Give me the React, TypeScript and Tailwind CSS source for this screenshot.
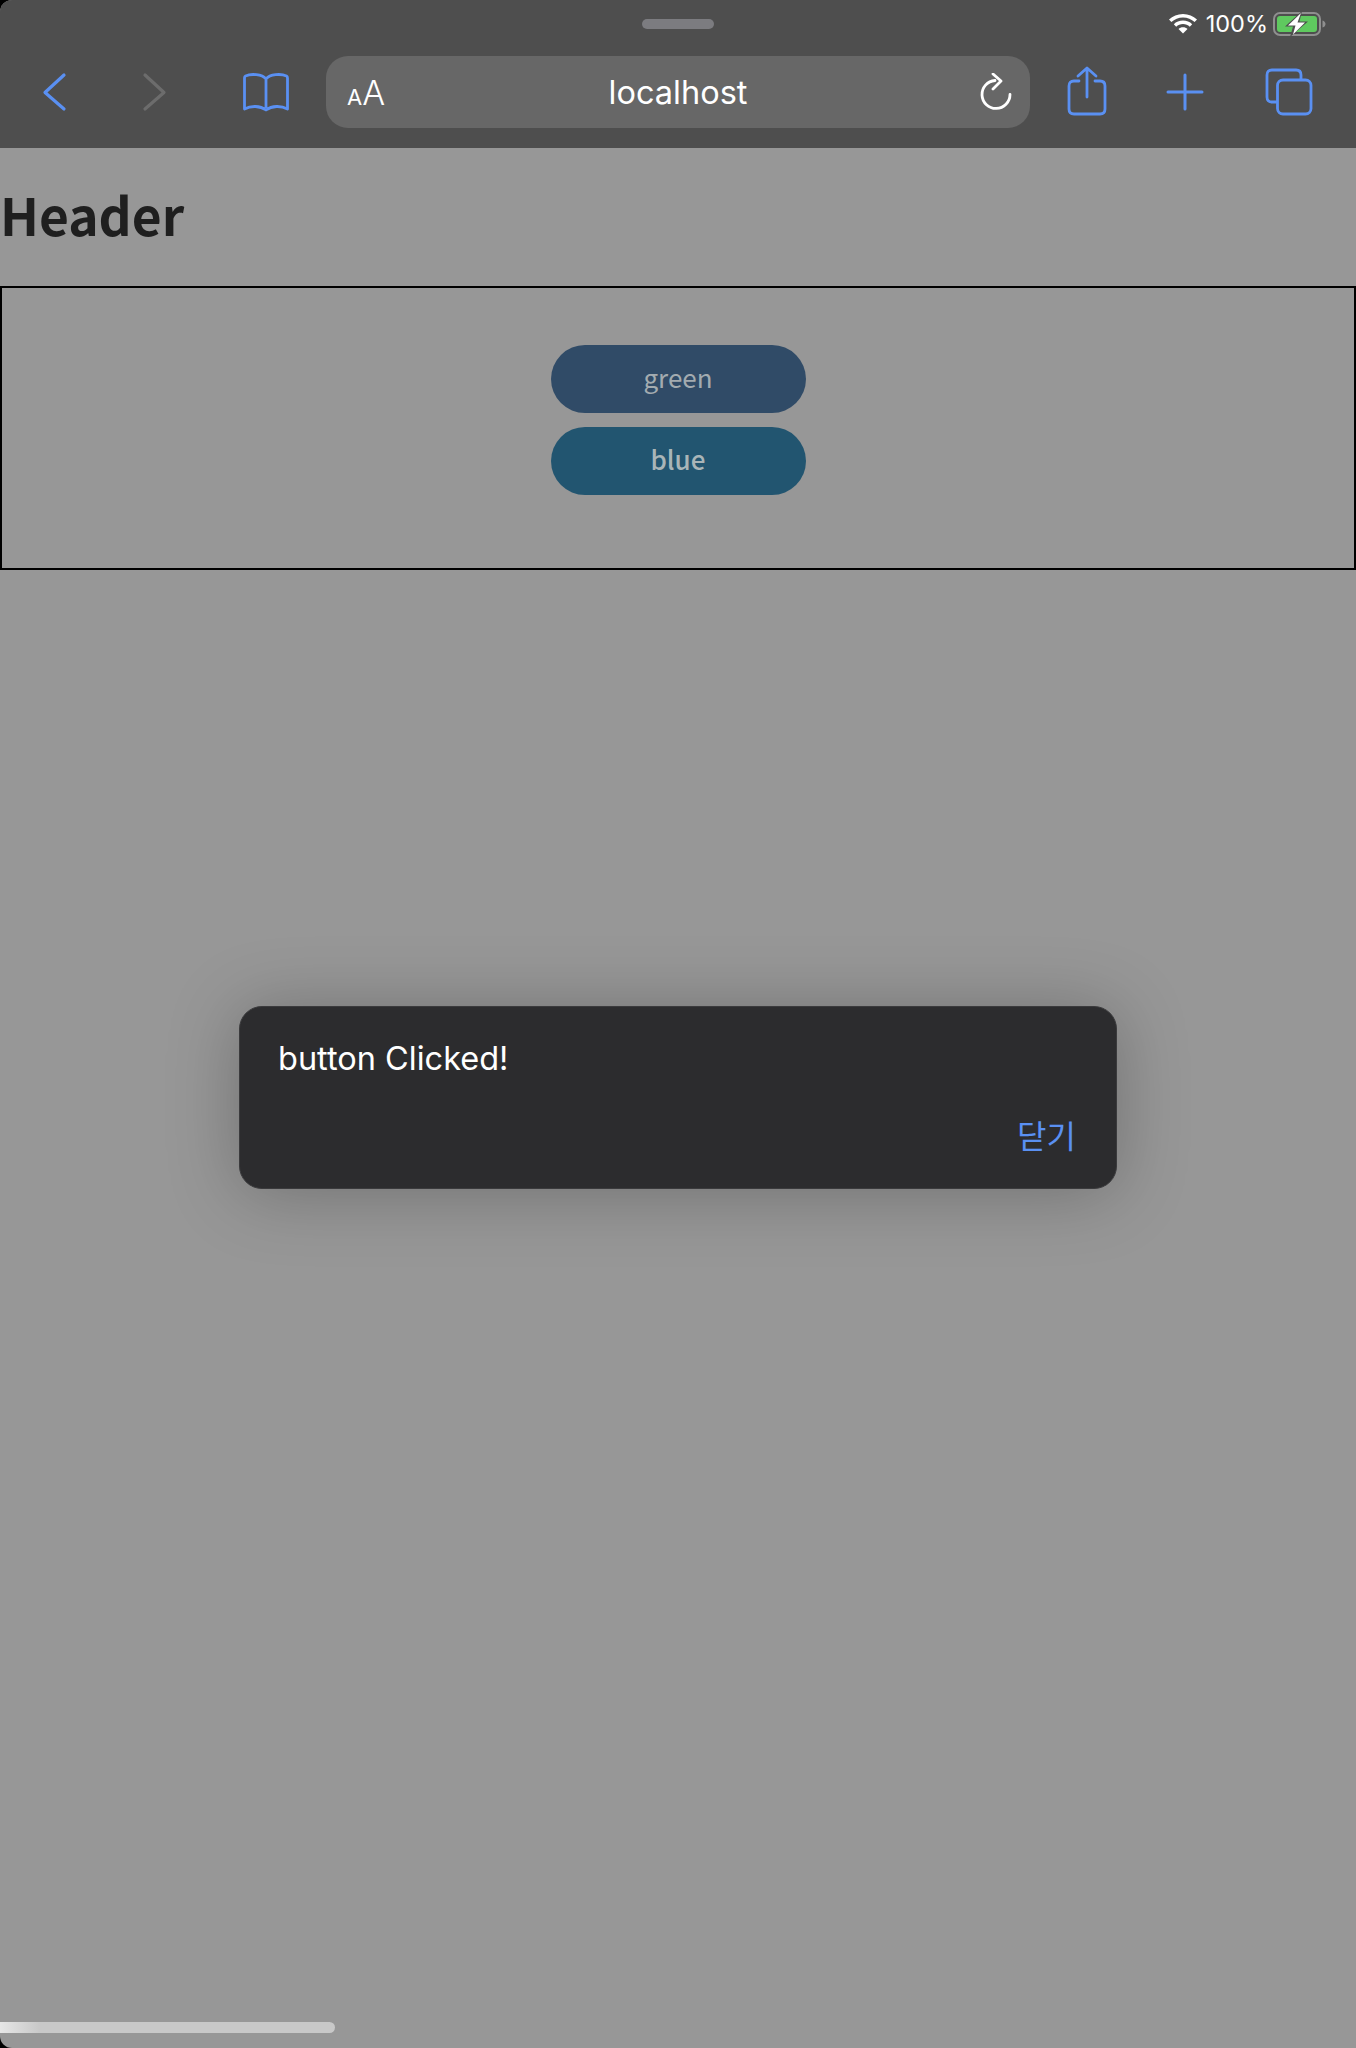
const blue = "#5a90f2";

function IconBack({ color, flip }: { color: string; flip?: boolean }) {
  return (
    <svg width="26" height="40" viewBox="0 0 26 40" fill="none" className={flip ? "-scale-x-100" : ""}>
      <path d="M23 3 L4 20.5 L23 37" stroke={color} strokeWidth="3.2" strokeLinecap="round" strokeLinejoin="round" />
    </svg>
  );
}

function IconBook() {
  return (
    <svg width="46" height="40" viewBox="0 0 46 40" fill="none">
      <path
        d="M23 7 C19 2 8 1.500 2.500 4 C1.700 4.400 1.500 5 1.500 6 L1.500 37 C8 33.500 17 33.500 23 38 C29 33.500 38 33.500 44.500 37 L44.500 6 C44.500 5 44.300 4.400 43.500 4 C38 1.500 27 2 23 7 Z M23 7 L23 36"
        stroke={blue}
        strokeWidth="2.8"
        strokeLinejoin="round"
      />
    </svg>
  );
}

function IconReload() {
  return (
    <svg width="34" height="40" viewBox="0 0 34 40" fill="none">
      <path
        d="M16 7.500 A14 14 0 1 0 31 21.500"
        stroke="white"
        strokeWidth="2.800"
        strokeLinecap="round"
      />
      <path d="M14 1 L22 8 L14 16" stroke="white" strokeWidth="2.800" strokeLinecap="round" strokeLinejoin="round" />
    </svg>
  );
}

function IconShare() {
  return (
    <svg width="40" height="50" viewBox="0 0 40 50" fill="none">
      <path
        d="M12 15 L7 15 Q2 15 2 20 L2 43 Q2 48 7 48 L33 48 Q38 48 38 43 L38 20 Q38 15 33 15 L28 15"
        stroke={blue}
        strokeWidth="2.800"
        strokeLinecap="round"
      />
      <path d="M20 2.500 L20 31 M11 10 L20 2 L29 10" stroke={blue} strokeWidth="2.800" strokeLinecap="round" strokeLinejoin="round" />
    </svg>
  );
}

function IconPlus() {
  return (
    <svg width="38" height="38" viewBox="0 0 38 38" fill="none">
      <path d="M19 2 L19 36 M2 19 L36 19" stroke={blue} strokeWidth="3" strokeLinecap="round" />
    </svg>
  );
}

function IconTabs() {
  return (
    <svg width="48" height="48" viewBox="0 0 48 48" fill="none">
      <path
        d="M11 34 L7 34 Q2 34 2 29 L2 7 Q2 2 7 2 L31 2 Q36 2 36 7 L36 11"
        stroke={blue}
        strokeWidth="2.800"
        strokeLinecap="round"
      />
      <rect x="12.500" y="12" width="33.500" height="34" rx="5.500" stroke={blue} strokeWidth="2.800" />
    </svg>
  );
}

function IconWifi() {
  return (
    <svg width="28" height="20" viewBox="0 0 28 20" fill="white">
      <path d="M14 0 C19.500 0 24.300 2.100 28 5.600 L25.600 8.100 C22.500 5.200 18.500 3.500 14 3.500 C9.500 3.500 5.500 5.200 2.400 8.100 L0 5.600 C3.700 2.100 8.500 0 14 0 Z" />
      <path d="M14 6.600 C17.600 6.600 20.800 8 23.200 10.200 L20.800 12.700 C19 11.100 16.600 10.100 14 10.100 C11.400 10.100 9 11.100 7.200 12.700 L4.800 10.200 C7.200 8 10.400 6.600 14 6.600 Z" />
      <path d="M14 13.200 C15.800 13.200 17.300 13.800 18.500 14.900 L14 19.600 L9.500 14.900 C10.700 13.800 12.200 13.200 14 13.200 Z" />
    </svg>
  );
}

function IconBattery() {
  return (
    <svg width="53" height="24" viewBox="0 0 53 24" fill="none">
      <rect x="1" y="1" width="46" height="22" rx="6" stroke="#8f8f8f" strokeWidth="2" />
      <rect x="4" y="4" width="40" height="16" rx="3" fill="#5fc95f" />
      <path d="M49.500 8.500 C51.500 9 52.500 10.500 52.500 12 C52.500 13.500 51.500 15 49.500 15.500 Z" fill="#8f8f8f" />
      <path d="M29 -1 L12 14.500 L20 14.500 L17 25 L35 9.500 L26.500 9.500 Z" fill="#4e4e4e" />
      <path d="M28 1 L15 13.500 L22.500 13.500 L20 22.500 L32 10.500 L24.500 10.500 Z" fill="white" />
    </svg>
  );
}

function PillButton({ label, className }: { label: string; className: string }) {
  return (
    <button className={`flex h-[68px] w-[255px] items-center justify-center rounded-full pb-[6px] text-[26px] ${className}`}>
      {label}
    </button>
  );
}

export default function App() {
  return (
    <div className="h-[2048px] w-[1356px] bg-black">
      <div className="relative flex h-full flex-col overflow-hidden rounded-l-[12px] bg-[#979797] font-['Noto_Sans_CJK_KR',sans-serif]">
        {/* safari toolbar */}
        <header className="relative h-[148px] shrink-0 bg-[#4e4e4e] font-['Inter',sans-serif] text-white">
          <div className="absolute left-[642px] top-[19px] h-[10px] w-[72px] rounded-full bg-[#7c7c80]" />
          <div className="flex h-[56px] items-center justify-end pb-[8px] pr-[30px]">
            <IconWifi />
            <span className="ml-[9px] mr-[5px] text-[23.500px] leading-none">100%</span>
            <IconBattery />
          </div>
          <div className="flex h-[72px] items-center">
            <div className="ml-[41px] -mt-[1px]"><IconBack color={blue} /></div>
            <div className="ml-[75px] -mt-[1px]"><IconBack color="#6c6c6c" flip /></div>
            <div className="ml-[75px] -mt-[1px]"><IconBook /></div>
            <div className="relative ml-[37px] flex h-[72px] w-[704px] items-center justify-center rounded-[22px] bg-[#676767]">
              <span className="absolute left-[21px] top-[20px] flex items-baseline leading-none">
                <span className="text-[22px]">A</span>
                <span className="text-[34px] font-light">A</span>
              </span>
              <span className="pt-[2px] text-[32.500px] leading-none">localhost</span>
              <div className="absolute right-[17px] top-[17px]"><IconReload /></div>
            </div>
            <div className="ml-[37px] mb-[2px]"><IconShare /></div>
            <div className="ml-[59px]"><IconPlus /></div>
            <div className="ml-[61px]"><IconTabs /></div>
          </div>
        </header>

        {/* page */}
        <h1 className="flex h-[138px] shrink-0 items-center pb-[6px] text-[51.500px] font-bold text-[#1f1f1f]">Header</h1>
        <div className="flex h-[284px] shrink-0 flex-col items-center gap-[14px] border-2 border-black pt-[57px]">
          <PillButton label="green" className="bg-[#304b67] text-[#a3abb0]" />
          <PillButton label="blue" className="bg-[#225570] font-medium text-[#a9b5b8]" />
        </div>

        {/* alert */}
        <div className="absolute left-[239px] top-[1006px] flex h-[183px] w-[878px] flex-col justify-between rounded-[23px] border border-[#3b3b3d] bg-[#2c2c2e] px-[38px] pb-[29px] pt-[27px] shadow-[0_4px_70px_rgba(0,0,0,0.25)]">
          <p className="font-['Inter',sans-serif] text-[32.500px] leading-[50px] text-white">button Clicked!</p>
          <button className="self-end pr-[2px] text-[32px] leading-[50px] text-[#5a90f2]">닫기</button>
        </div>

        {/* scrollbar */}
        <div className="absolute left-0 top-[2022px] h-[11px] w-[335px] rounded-r-full bg-gradient-to-r from-[#e6e6e6] via-[#c8c8c8] via-[12%] to-[#c8c8c8]" />
      </div>
    </div>
  );
}
